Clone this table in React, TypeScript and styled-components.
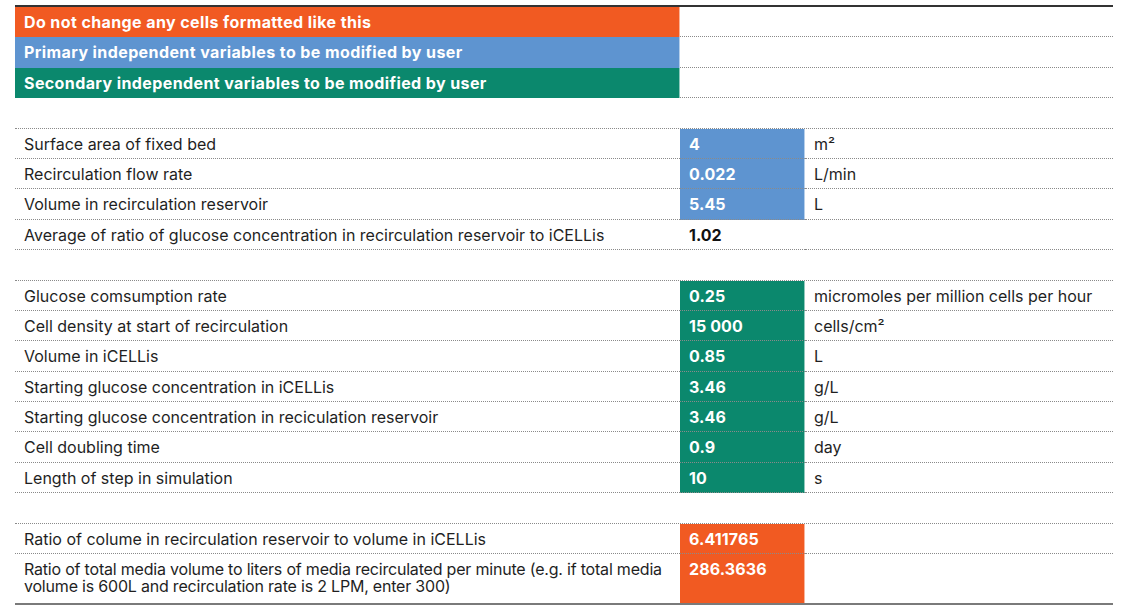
import React from "react";
import styled, { createGlobalStyle, css } from "styled-components";

type Tone = "locked" | "primary" | "secondary";

const toneColors: Record<Tone, string> = {
	locked: "#f15a22",
	primary: "#5e94d0",
	secondary: "#0b886d",
};

const GlobalStyle = createGlobalStyle`
	html, body {
		margin: 0;
		padding: 0;
		background: #ffffff;
	}
	body {
		font-family: Inter, Roboto, "Liberation Sans", Arial, sans-serif;
		color: #1f1f1f;
	}
`;

const Sheet = styled.div`
	width: 1098px;
	margin: 5px 0 0 15px;
	border-top: 2px solid #333333;
	border-bottom: 2px solid #7a7a7a;
`;

const Row = styled.div<{ $tall?: boolean }>`
	display: grid;
	grid-template-columns: 665px 125px 1fr;
	height: ${(p) => (p.$tall ? "49.3px" : "30.4px")};
`;

const cellBase = css<{ $last?: boolean }>`
	box-sizing: border-box;
	padding: 7px 9px 0;
	font-size: 16px;
	line-height: 17px;
	border-bottom: ${(p) => (p.$last ? "none" : "1px dotted #8a8a8a")};
`;

const LegendCell = styled.div<{ $tone: Tone }>`
	box-sizing: border-box;
	padding: 7px 9px 0;
	background: ${(p) => toneColors[p.$tone]};
	border-right: 1px solid rgba(255, 255, 255, 0.55);
	color: #ffffff;
	font-size: 16px;
	line-height: 17px;
	font-weight: 700;
	letter-spacing: 0.4px;
	white-space: nowrap;
`;

const Blank = styled.div<{ $last?: boolean; $span?: number }>`
	${cellBase};
	grid-column: span ${(p) => p.$span ?? 1};
`;

const Label = styled.div<{ $last?: boolean; $tight?: boolean }>`
	${cellBase};
	padding-right: 0;
	white-space: pre-line;
	letter-spacing: ${(p) => (p.$tight ? "-0.2px" : "0")};
`;

const Value = styled.div<{ $last?: boolean; $tone?: Tone }>`
	${cellBase};
	font-weight: 700;
	letter-spacing: 0.1px;
	${(p) =>
		p.$tone
			? css`
					background: ${toneColors[p.$tone]};
					color: #ffffff;
					border-right: 1px solid rgba(255, 255, 255, 0.55);
			  `
			: css`
					color: #111111;
					letter-spacing: 0;
			  `}
`;

const Unit = styled.div<{ $last?: boolean }>`
	${cellBase};
`;

type DataRow = {
	label: string;
	value: string;
	unit?: string;
	tone?: Tone;
};

const legend: { text: string; tone: Tone }[] = [
	{ text: "Do not change any cells formatted like this", tone: "locked" },
	{ text: "Primary independent variables to be modified by user", tone: "primary" },
	{ text: "Secondary independent variables to be modified by user", tone: "secondary" },
];

const primaryRows: DataRow[] = [
	{ label: "Surface area of fixed bed", value: "4", unit: "m²", tone: "primary" },
	{ label: "Recirculation flow rate", value: "0.022", unit: "L/min", tone: "primary" },
	{ label: "Volume in recirculation reservoir", value: "5.45", unit: "L", tone: "primary" },
	{
		label: "Average of ratio of glucose concentration in recirculation reservoir to iCELLis",
		value: "1.02",
	},
];

const secondaryRows: DataRow[] = [
	{ label: "Glucose comsumption rate", value: "0.25", unit: "micromoles per million cells per hour", tone: "secondary" },
	{ label: "Cell density at start of recirculation", value: "15 000", unit: "cells/cm²", tone: "secondary" },
	{ label: "Volume in iCELLis", value: "0.85", unit: "L", tone: "secondary" },
	{ label: "Starting glucose concentration in iCELLis", value: "3.46", unit: "g/L", tone: "secondary" },
	{ label: "Starting glucose concentration in reciculation reservoir", value: "3.46", unit: "g/L", tone: "secondary" },
	{ label: "Cell doubling time", value: "0.9", unit: "day", tone: "secondary" },
	{ label: "Length of step in simulation", value: "10", unit: "s", tone: "secondary" },
];

const outputRows: DataRow[] = [
	{ label: "Ratio of colume in recirculation reservoir to volume in iCELLis", value: "6.411765", tone: "locked" },
	{
		label:
			"Ratio of total media volume to liters of media recirculated per minute (e.g. if total media\nvolume is 600L and recirculation rate is 2 LPM, enter 300)",
		value: "286.3636",
		tone: "locked",
	},
];

const SpacerRow = () => (
	<Row>
		<Blank $span={3} />
	</Row>
);

const Line = ({ row, tall, last }: { row: DataRow; tall?: boolean; last?: boolean }) => (
	<Row $tall={tall}>
		<Label $last={last} $tight={tall}>
			{row.label}
		</Label>
		<Value $last={last} $tone={row.tone}>
			{row.value}
		</Value>
		<Unit $last={last}>{row.unit}</Unit>
	</Row>
);

const App = () => {
	return (
		<>
			<GlobalStyle />
			<Sheet>
				{legend.map((l) => (
					<Row key={l.text}>
						<LegendCell $tone={l.tone}>{l.text}</LegendCell>
						<Blank $span={2} />
					</Row>
				))}
				<SpacerRow />
				{primaryRows.map((r) => (
					<Line key={r.label} row={r} />
				))}
				<SpacerRow />
				{secondaryRows.map((r) => (
					<Line key={r.label} row={r} />
				))}
				<SpacerRow />
				{outputRows.map((r, i) => (
					<Line key={r.label} row={r} tall={i === 1} last={i === 1} />
				))}
			</Sheet>
		</>
	);
};

export default App;
